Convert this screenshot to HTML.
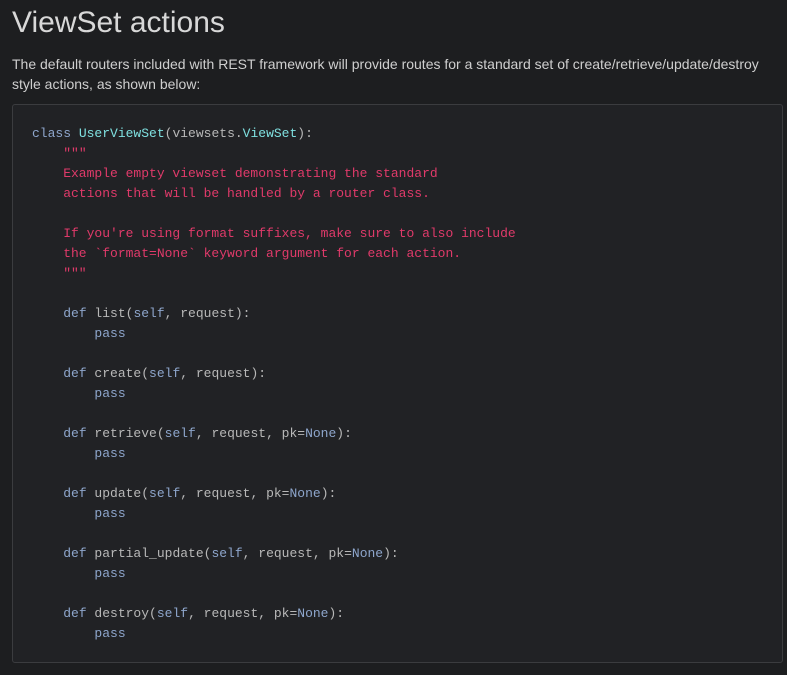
<!DOCTYPE html>
<html><head><style>
body{margin:0;background:#1d1e20;font-family:"Liberation Sans",sans-serif;color:#cfcfcf;width:787px;height:675px;overflow:hidden}
h1{font-weight:normal;font-size:30px;margin:0;position:absolute;left:12px;top:6px;color:#d8d8d8}
p{position:absolute;left:12px;top:54px;margin:0;font-size:14px;line-height:20px;width:770px;color:#cfcfcf}
pre{position:absolute;left:12px;top:104px;width:750px;height:538px;margin:0;padding:19px 0 0 19px;background:#212225;border:1px solid #3b3c3f;border-radius:3px;font-family:"Liberation Mono",monospace;font-size:13px;line-height:20px;color:#b8b8b8}
.k{color:#8ea6cc}.c{color:#7fe0e0}.s{color:#e03a6a}
</style></head><body>
<h1>ViewSet actions</h1>
<p>The default routers included with REST framework will provide routes for a standard set of create/retrieve/update/destroy style actions, as shown below:</p>
<pre><span class="k">class</span> <span class="c">UserViewSet</span>(viewsets.<span class="c">ViewSet</span>):
    <span class="s">"""
    Example empty viewset demonstrating the standard
    actions that will be handled by a router class.

    If you're using format suffixes, make sure to also include
    the `format=None` keyword argument for each action.
    """</span>

    <span class="k">def</span> list(<span class="k">self</span>, request):
        <span class="k">pass</span>

    <span class="k">def</span> create(<span class="k">self</span>, request):
        <span class="k">pass</span>

    <span class="k">def</span> retrieve(<span class="k">self</span>, request, pk=<span class="k">None</span>):
        <span class="k">pass</span>

    <span class="k">def</span> update(<span class="k">self</span>, request, pk=<span class="k">None</span>):
        <span class="k">pass</span>

    <span class="k">def</span> partial_update(<span class="k">self</span>, request, pk=<span class="k">None</span>):
        <span class="k">pass</span>

    <span class="k">def</span> destroy(<span class="k">self</span>, request, pk=<span class="k">None</span>):
        <span class="k">pass</span></pre>
</body></html>
